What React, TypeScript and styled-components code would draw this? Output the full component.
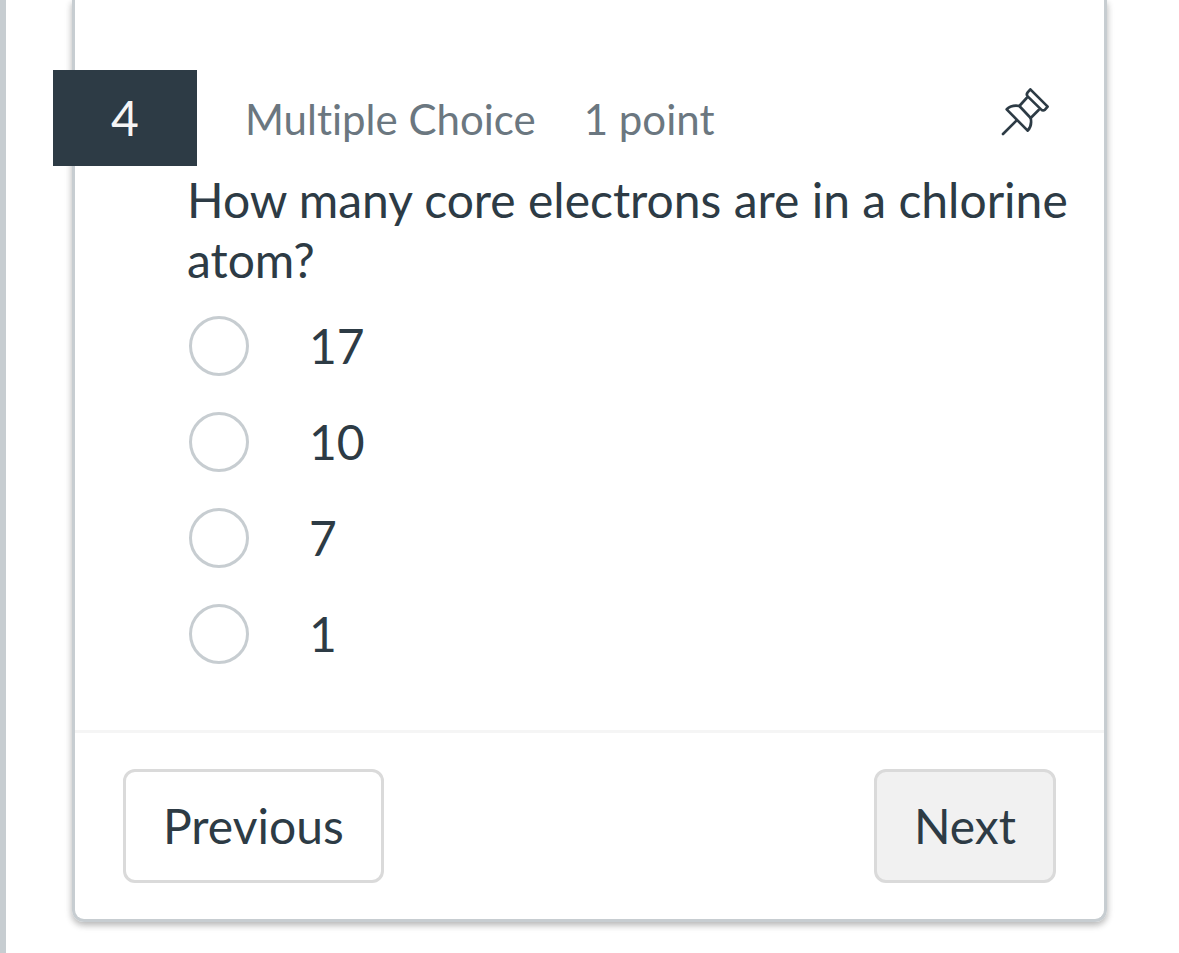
import React, { useState } from "react";
import styled, { createGlobalStyle } from "styled-components";

const GlobalStyle = createGlobalStyle`
  *, *::before, *::after { box-sizing: border-box; }
  body {
    margin: 0;
    background: #fff;
    color: #2d3b45;
    font-family: Lato, "Liberation Sans", sans-serif;
    font-size: 48px;
    line-height: 60px;
    font-variant-ligatures: none;
  }
`;

const Page = styled.main`
  min-height: 100vh;
  padding: 0 72px 31px 66px;
  border-left: 6px solid #c7cdd1;
`;

const Card = styled.form`
  padding-top: 70px;
  border: 3px solid #c7cdd1;
  border-top: 0;
  border-radius: 0 0 12px 12px;
  box-shadow: 0 3px 6px rgba(0, 0, 0, 0.2), 0 3px 9px rgba(0, 0, 0, 0.12);
`;

const Header = styled.header`
  display: flex;
  align-items: center;
  gap: 48px;
  margin-left: -22px;
  padding-right: 53px;
`;

const NumberBadge = styled.span`
  display: flex;
  align-items: center;
  justify-content: center;
  width: 144px;
  height: 96px;
  background: #2d3b45;
  color: #f5f5f5;
`;

const Meta = styled.span`
  padding-top: 2px;
  color: #6b7780;
  font-size: 42px;
`;

const PinButton = styled.button`
  display: flex;
  margin: 0 0 12px auto;
  padding: 0;
  border: 0;
  background: none;
  color: inherit;
  cursor: pointer;
`;

const Question = styled.fieldset`
  min-width: 0;
  margin: 0;
  padding: 3px 36px 48px 112px;
  border: 0;
`;

const Prompt = styled.legend`
  padding: 4px 0 5px;
`;

const Option = styled.label`
  display: flex;
  align-items: center;
  gap: 60px;
  height: 96px;
  padding-left: 2px;
  cursor: pointer;
`;

const Radio = styled.input`
  appearance: none;
  flex: none;
  width: 60px;
  height: 60px;
  margin: 0;
  border: 3px solid #c7cdd1;
  border-radius: 50%;
  background: #fff;

  &:checked {
    border: 18px solid #2d3b45;
  }
`;

const Footer = styled.footer`
  display: flex;
  justify-content: space-between;
  padding: 36px 48px;
  border-top: 3px solid #f5f5f5;
`;

const NavButton = styled.button<{ $filled?: boolean }>`
  height: 114px;
  padding: 0 37px;
  border: 3px solid #dadada;
  border-radius: 12px;
  background: ${(p) => (p.$filled ? "#f1f1f1" : "#fff")};
  color: inherit;
  font: inherit;
  cursor: pointer;
`;

const answers = ["17", "10", "7", "1"];

function PinIcon() {
  return (
    <svg
      width="51"
      height="51"
      viewBox="45 36 153 153"
      fill="none"
      stroke="currentColor"
      strokeWidth="8"
      strokeLinejoin="round"
      strokeLinecap="round"
      aria-hidden="true"
    >
      <path d="M136 43 L188 95 L180 104 Q174 109 168 103 L128 64 Q123 58 128 52 Z" />
      <path d="M125 69 L103 93 M161 105 L137 129" />
      <path d="M65 103 Q80 89 103 93 L137 129 Q142 152 128 167 Z" />
      <path d="M95 136 L54 177" />
    </svg>
  );
}

export default function App() {
  const [selected, setSelected] = useState<string | null>(null);

  return (
    <>
      <GlobalStyle />
      <Page>
        <Card onSubmit={(event) => event.preventDefault()}>
          <Header>
            <NumberBadge>4</NumberBadge>
            <Meta>Multiple Choice</Meta>
            <Meta>1 point</Meta>
            <PinButton type="button" aria-label="Pin question">
              <PinIcon />
            </PinButton>
          </Header>
          <Question>
            <Prompt>How many core electrons are in a chlorine atom?</Prompt>
            {answers.map((answer) => (
              <Option key={answer}>
                <Radio
                  type="radio"
                  name="answer"
                  value={answer}
                  checked={selected === answer}
                  onChange={() => setSelected(answer)}
                />
                <span>{answer}</span>
              </Option>
            ))}
          </Question>
          <Footer>
            <NavButton type="button">Previous</NavButton>
            <NavButton type="button" $filled>
              Next
            </NavButton>
          </Footer>
        </Card>
      </Page>
    </>
  );
}
